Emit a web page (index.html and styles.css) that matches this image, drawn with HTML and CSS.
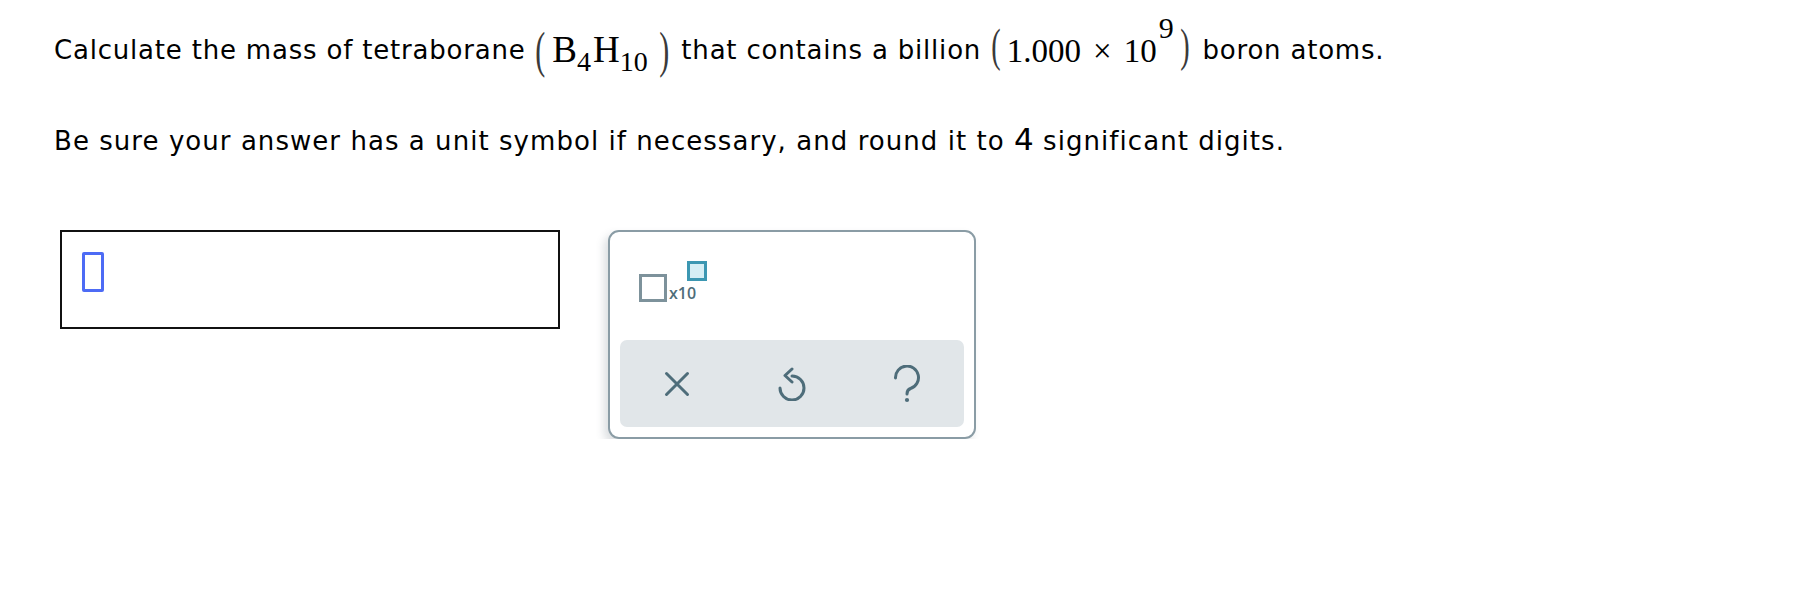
FILE: index.html
```html
<!DOCTYPE html>
<html>
<head>
<meta charset="utf-8">
<link rel="stylesheet" href="styles.css">
</head>
<body>
<div class="page">
  <p class="q1">Calculate the mass of tetraborane <span class="math m1"><span class="paren lp">(</span><span class="mi">B</span><sub class="msub">4</sub><span class="mi">H</span><sub class="msub">10</sub><span class="paren rp">)</span></span> that contains a billion <span class="math m2"><span class="paren lp">(</span><span class="mn">1.000</span><span class="mo">×</span><span class="mn">10</span><sup class="msup">9</sup><span class="paren rp">)</span></span> boron atoms.</p>
  <p class="q2">Be sure your answer has a unit symbol if necessary, and round it to <span class="num">4</span> significant digits.</p>
  <div class="answer-row">
    <div class="answer-box"><span class="cursor"></span></div>
    <div class="panel">
      <div class="tools">
        <svg class="x10" width="72" height="44" viewBox="0 0 72 44">
          <rect x="1.5" y="14.5" width="25" height="25" fill="#fff" stroke="#7d929b" stroke-width="3"/>
          <rect x="49.5" y="1.5" width="17" height="17" fill="#d5eef5" stroke="#3c97b2" stroke-width="3"/>
          <text x="30" y="38" class="x10-text">x10</text>
        </svg>
      </div>
      <div class="actions">
        <button class="act" aria-label="clear">
          <svg width="26" height="26" viewBox="0 0 26 26"><path d="M2.5 2.5 L23.5 23.5 M23.5 2.5 L2.5 23.5" stroke="#4e6d7a" stroke-width="3" stroke-linecap="round" fill="none"/></svg>
        </button>
        <button class="act" aria-label="undo">
          <svg width="30" height="34" viewBox="0 0 30 34"><path d="M15 9 A12 12 0 1 1 3 21" stroke="#4e6d7a" stroke-width="3" stroke-linecap="round" fill="none"/><path d="M15 2 L8 8.5 L15 15" stroke="#4e6d7a" stroke-width="3" stroke-linecap="round" stroke-linejoin="round" fill="none"/></svg>
        </button>
        <button class="act" aria-label="help">
          <svg width="28" height="38" viewBox="0 0 28 38"><path d="M2.5 13 A11.5 11.5 0 1 1 17.5 23.5 C15 24.5 14 26 14 29" stroke="#4e6d7a" stroke-width="3" stroke-linecap="round" fill="none"/><circle cx="14" cy="35" r="2.1" fill="#4e6d7a"/></svg>
        </button>
      </div>
    </div>
  </div>
</div>
</body>
</html>
```
FILE: styles.css
```css
html, body {
  margin: 0;
  padding: 0;
  background: #fff;
}
.page {
  padding: 28px 0 0 54px;
  font-family: "DejaVu Sans", sans-serif;
  font-size: 26px;
  letter-spacing: 0.95px;
  color: #000;
}
.q1 {
  margin: 0;
  height: 44px;
  line-height: 44px;
  white-space: nowrap;
  letter-spacing: 0.8px;
}
.q2 {
  margin: 47px 0 0;
  height: 44px;
  line-height: 44px;
  white-space: nowrap;
  letter-spacing: 1.05px;
}
.math {
  font-family: "Liberation Serif", "Times New Roman", serif;
  letter-spacing: 0;
  line-height: 0;
  white-space: nowrap;
}
.m1 {
  font-size: 37px;
}
.m2 {
  font-size: 33px;
}
.mi, .mn {
  vertical-align: -3px;
}
.paren {
  display: inline-block;
  line-height: 0;
  color: #3a3a3a;
  transform: scaleX(0.6);
}
.m1 .paren {
  font-size: 50px;
  vertical-align: -8px;
}
.m2 .paren {
  font-size: 47px;
  vertical-align: -2px;
}
.m1 .lp {
  margin: 0 4px 0 -3px;
}
.m1 .rp {
  margin: 0 0 0 6px;
}
.m2 .lp {
  margin: 0 3px 0 -2px;
}
.m2 .rp {
  margin: 0 1px 0 3px;
}
.msub {
  font-size: 28px;
  vertical-align: -12px;
  line-height: 0;
  margin-right: 2px;
}
.msup {
  font-size: 30px;
  vertical-align: 21px;
  line-height: 0;
  margin-left: 2px;
}
.mo {
  margin: 0 12px;
  vertical-align: -3px;
}
.num {
  font-family: "DejaVu Sans", sans-serif;
  font-size: 31px;
  letter-spacing: 0;
  line-height: 0;
}
.answer-row {
  display: flex;
  align-items: flex-start;
  gap: 48px;
  margin-top: 67px;
  padding-left: 6px;
  letter-spacing: 0;
}
.answer-box {
  box-sizing: border-box;
  width: 500px;
  height: 99px;
  border: 2px solid #111;
  padding: 20px 0 0 20px;
}
.cursor {
  display: block;
  box-sizing: border-box;
  width: 22px;
  height: 40px;
  border: 3px solid #4d6bf5;
  border-radius: 2px;
}
.panel {
  box-sizing: border-box;
  width: 368px;
  height: 209px;
  border: 2px solid #8a9ca5;
  border-radius: 11px;
  box-shadow: -4px 5px 9px rgba(60, 80, 90, 0.18);
  padding: 0 10px 10px;
  display: flex;
  flex-direction: column;
}
.tools {
  height: 108px;
  box-sizing: border-box;
  padding: 29px 0 0 19px;
}
.x10 {
  display: block;
}
.x10-text {
  font-family: "Open Sans", "Liberation Sans", sans-serif;
  font-size: 16px;
  font-weight: 600;
  fill: #4e6d7a;
}
.actions {
  flex: 1;
  display: flex;
  background: #e1e6e9;
  border-radius: 7px;
}
.act {
  flex: 1;
  border: 0;
  background: transparent;
  padding: 0;
  display: flex;
  align-items: center;
  justify-content: center;
}
.act svg {
  display: block;
}
```
